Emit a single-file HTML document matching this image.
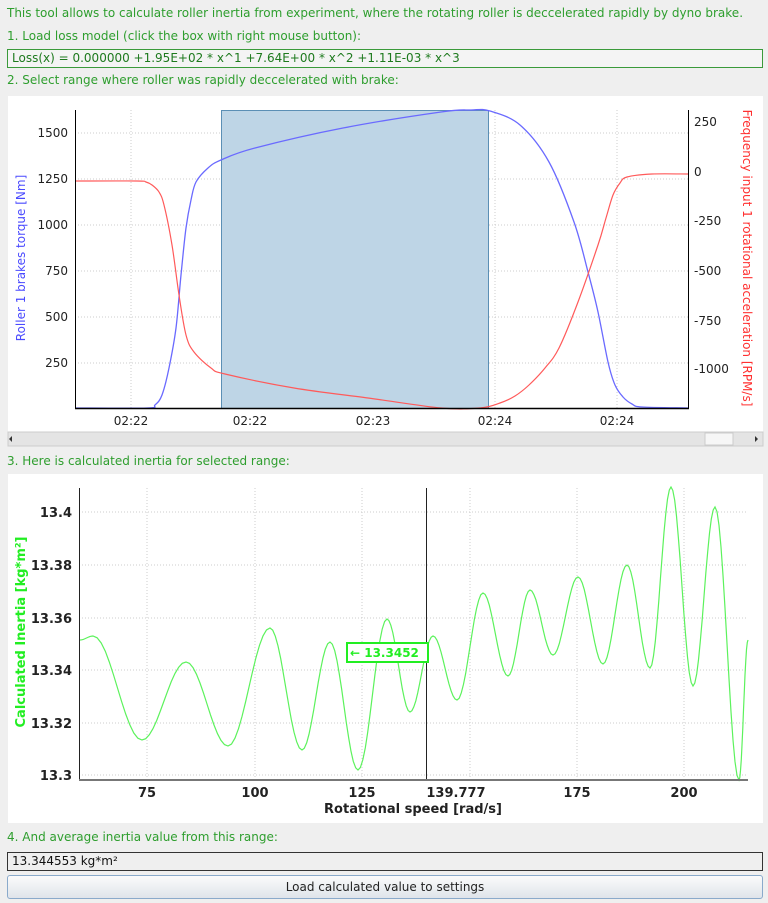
<!DOCTYPE html>
<html><head><meta charset="utf-8"><style>
*{margin:0;padding:0;box-sizing:border-box}
body{width:768px;height:903px;background:#efefef;font-family:"DejaVu Sans","Liberation Sans",sans-serif;font-size:12px;position:relative;overflow:hidden;color:#222}
.g{position:absolute;left:7px;color:#2e9e2e;font-size:12px;white-space:nowrap}
.box{position:absolute;left:7px;width:756px;height:19px;padding-left:4px;line-height:17px;white-space:nowrap}
svg{position:absolute}
</style></head><body>
<div class="g" style="top:6px">This tool allows to calculate roller inertia from experiment, where the rotating roller is deccelerated rapidly by dyno brake.</div>
<div class="g" style="top:29px">1. Load loss model (click the box with right mouse button):</div>
<div class="box" style="top:49px;border:1px solid #3a9a3a;color:#1e7a1e;background:#f4f4f4">Loss(x) = 0.000000 +1.95E+02 * x^1 +7.64E+00 * x^2 +1.11E-03 * x^3</div>
<div class="g" style="top:73px">2. Select range where roller was rapidly deccelerated with brake:</div>

<svg style="left:0;top:0" width="768" height="903" font-family="DejaVu Sans, Liberation Sans, sans-serif">
<rect x="8" y="96" width="755" height="336" fill="#fff"/>
<g stroke="#ccc" stroke-dasharray="1,2" stroke-width="1">
<line x1="131" y1="110" x2="131" y2="408"/><line x1="250" y1="110" x2="250" y2="408"/><line x1="373" y1="110" x2="373" y2="408"/><line x1="495" y1="110" x2="495" y2="408"/><line x1="617" y1="110" x2="617" y2="408"/>
<line x1="75" y1="133" x2="688" y2="133"/><line x1="75" y1="179" x2="688" y2="179"/><line x1="75" y1="225" x2="688" y2="225"/><line x1="75" y1="271" x2="688" y2="271"/><line x1="75" y1="317" x2="688" y2="317"/><line x1="75" y1="363" x2="688" y2="363"/>
</g>
<rect x="221.5" y="110.5" width="267" height="298" fill="#bed5e6" stroke="#5b8fb5"/>
<path id="bc" fill="none" stroke="#6a6aff" stroke-width="1.3"/>
<path id="rc" fill="none" stroke="#ff5a5a" stroke-width="1.2"/>
<line x1="75.5" y1="110" x2="75.5" y2="409" stroke="#000"/>
<line x1="688.5" y1="110" x2="688.5" y2="409" stroke="#000"/>
<line x1="75" y1="408.5" x2="689" y2="408.5" stroke="#000" stroke-width="1.5"/>
<g font-size="12" fill="#222" text-anchor="end">
<text x="68" y="137">1500</text><text x="68" y="183">1250</text><text x="68" y="229">1000</text><text x="68" y="275">750</text><text x="68" y="321">500</text><text x="68" y="367">250</text>
</g>
<g font-size="12" fill="#222">
<text x="694" y="126">250</text><text x="694" y="176">0</text><text x="694" y="225">-250</text><text x="694" y="275">-500</text><text x="694" y="325">-750</text><text x="694" y="373">-1000</text>
</g>
<g font-size="12" fill="#222" text-anchor="middle">
<text x="131" y="425">02:22</text><text x="250" y="425">02:22</text><text x="373" y="425">02:23</text><text x="495" y="425">02:24</text><text x="617" y="425">02:24</text>
</g>
<text transform="translate(25,258) rotate(-90)" font-size="12" fill="#4a4aff" text-anchor="middle">Roller 1 brakes torque [Nm]</text>
<text transform="translate(743,258) rotate(90)" font-size="12" fill="#ff3030" text-anchor="middle">Frequency input 1 rotational acceleration [RPM/s]</text>
<rect x="8" y="432" width="755" height="14" fill="#e4e4e4" stroke="#ccc"/>
<rect x="705" y="433" width="28" height="12" fill="#f6f6f6" stroke="#ccc"/>
<path d="M12,436 l-3,3 l3,3z" fill="#333"/><path d="M755,436 l3,3 l-3,3z" fill="#333"/>
<text x="7" y="465" font-size="12" fill="#2e9e2e">3. Here is calculated inertia for selected range:</text>

<rect x="8" y="474" width="755" height="349" fill="#fff"/>
<g stroke="#ccc" stroke-dasharray="1,2">
<line x1="147" y1="488" x2="147" y2="780"/><line x1="255" y1="488" x2="255" y2="780"/><line x1="362" y1="488" x2="362" y2="780"/><line x1="470" y1="488" x2="470" y2="780"/><line x1="577" y1="488" x2="577" y2="780"/><line x1="684" y1="488" x2="684" y2="780"/>
<line x1="79" y1="512" x2="748" y2="512"/><line x1="79" y1="565" x2="748" y2="565"/><line x1="79" y1="618" x2="748" y2="618"/><line x1="79" y1="670" x2="748" y2="670"/><line x1="79" y1="723" x2="748" y2="723"/><line x1="79" y1="775" x2="748" y2="775"/>
</g>
<path id="gc" fill="none" stroke="#5cf25c" stroke-width="1.2"/>
<line x1="426.5" y1="488" x2="426.5" y2="780" stroke="#222"/>
<line x1="79.5" y1="488" x2="79.5" y2="781" stroke="#222"/>
<line x1="79" y1="780" x2="748" y2="780" stroke="#777" stroke-width="2"/>
<rect x="347" y="643" width="81" height="19" fill="#fff" stroke="#22ee22" stroke-width="2"/>
<text x="350" y="657" font-size="12" font-weight="bold" fill="#22ee22">← 13.3452</text>
<g font-size="13" font-weight="bold" fill="#222" text-anchor="end">
<text x="72" y="517">13.4</text><text x="72" y="570">13.38</text><text x="72" y="623">13.36</text><text x="72" y="675">13.34</text><text x="72" y="728">13.32</text><text x="72" y="780">13.3</text>
</g>
<g font-size="13" font-weight="bold" fill="#222" text-anchor="middle">
<text x="147" y="797">75</text><text x="255" y="797">100</text><text x="362" y="797">125</text><text x="456" y="797">139.777</text><text x="577" y="797">175</text><text x="684" y="797">200</text>
<text x="413" y="813">Rotational speed [rad/s]</text>
</g>
<text transform="translate(25,632) rotate(-90)" font-size="13" font-weight="bold" fill="#22ee22" text-anchor="middle">Calculated Inertia [kg*m²]</text>
</svg>

<div class="g" style="top:830px">4. And average inertia value from this range:</div>
<div class="box" style="top:852px;border:1px solid #333;background:#efefef;color:#111">13.344553 kg*m²</div>
<div style="position:absolute;left:7px;top:875px;width:756px;height:24px;border:1px solid #8aaacb;border-radius:3px;background:linear-gradient(#fbfbfb,#dfe4ea);text-align:center;line-height:22px;color:#222">Load calculated value to settings</div>
<script>
function cr(p){var d="M"+p[0][0]+","+p[0][1];for(var i=0;i<p.length-1;i++){var p0=p[i-1]||p[i],p1=p[i],p2=p[i+1],p3=p[i+2]||p2;d+=" C"+(p1[0]+(p2[0]-p0[0])/6).toFixed(1)+","+(p1[1]+(p2[1]-p0[1])/6).toFixed(1)+" "+(p2[0]-(p3[0]-p1[0])/6).toFixed(1)+","+(p2[1]-(p3[1]-p1[1])/6).toFixed(1)+" "+p2[0]+","+p2[1];}return d;}
document.getElementById("bc").setAttribute("d",cr([[75,408],[147,408],[155,405],[162,395],[169,368],[176,328],[181,275],[186,228],[191,200],[196,182],[208,168],[221,160],[255,148],[343,128],[441,112],[471,110],[490,111],[520,125],[549,162],[574,222],[588,272],[598,312],[608,362],[615,385],[623,397],[632,404],[642,407],[688,408]]));
document.getElementById("rc").setAttribute("d",cr([[75,181],[137,181],[146,182],[152,185],[159,192],[164,205],[172,245],[179,295],[186,335],[194,352],[211,368],[225,374],[294,388],[368,398],[441,408],[480,408],[500,403],[515,396],[529,385],[545,368],[559,348],[578,302],[598,245],[606,218],[613,195],[620,183],[627,177],[652,174],[688,174]]));
var p=[[80,640],[93,636],[142,740],[186,662],[228,746],[270,628],[302,750],[330,642],[358,770],[387,619],[410,712],[433,636],[457,700],[483,593],[508,676],[530,590],[553,655],[578,577],[603,664],[627,565],[650,668],[671,487],[693,686],[715,507],[739,780],[748,640]];
var d="M"+p[0][0]+","+p[0][1];
for(var i=0;i<p.length-1;i++){var a=p[i],b=p[i+1];for(var t=1;t<=12;t++){var s=t/12,x=a[0]+(b[0]-a[0])*s,y=a[1]+(b[1]-a[1])*(1-Math.cos(Math.PI*s))/2;d+=" L"+x.toFixed(1)+","+y.toFixed(1);}}
document.getElementById("gc").setAttribute("d",d);
</script>
</body></html>
